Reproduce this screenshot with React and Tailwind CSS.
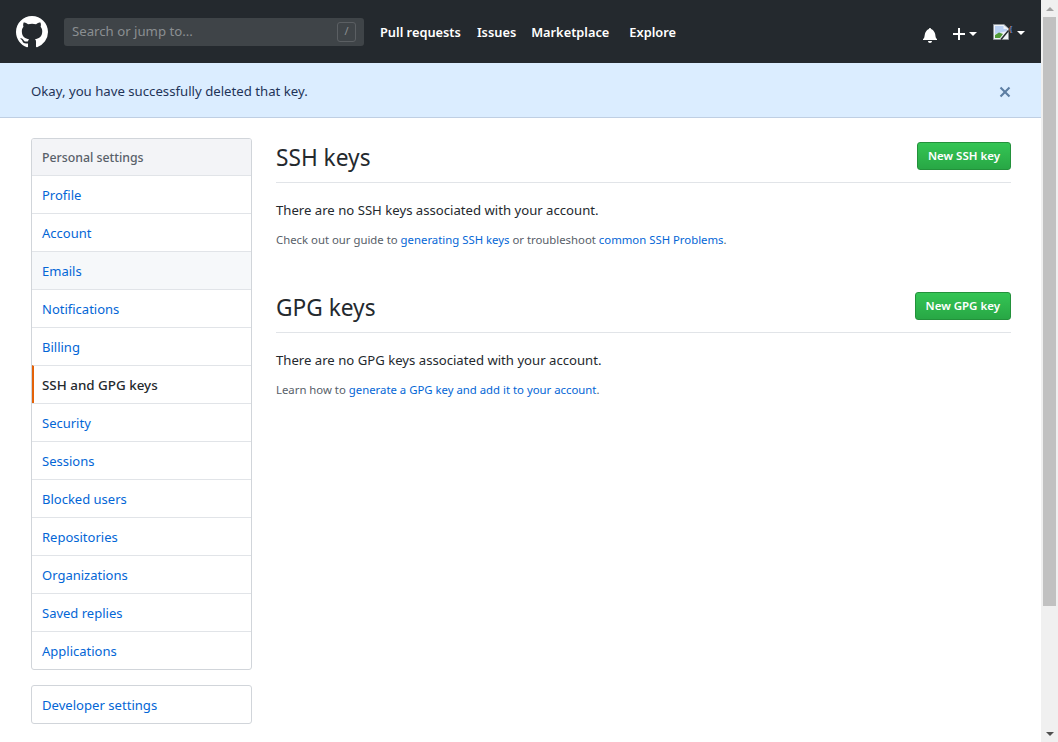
const font = "font-['Noto_Sans','Open_Sans',sans-serif]";

const navLinks = [
  { label: 'Pull requests', cls: 'ml-4' },
  { label: 'Issues', cls: 'ml-4' },
  { label: 'Marketplace', cls: 'ml-[15px]' },
  { label: 'Explore', cls: 'ml-5' },
];

const menuItems = [
  { label: 'Profile' },
  { label: 'Account' },
  { label: 'Emails', hover: true },
  { label: 'Notifications' },
  { label: 'Billing' },
  { label: 'SSH and GPG keys', selected: true },
  { label: 'Security' },
  { label: 'Sessions' },
  { label: 'Blocked users' },
  { label: 'Repositories' },
  { label: 'Organizations' },
  { label: 'Saved replies' },
  { label: 'Applications' },
];

function Caret({ className }) {
  return <span className={`ml-1 w-0 h-0 border-x-4 border-x-transparent border-t-4 border-t-white ${className}`} />;
}

function Header() {
  return (
    <header className="h-[63px] bg-[#24292e] flex items-center pl-4 pr-[16px] shrink-0">
      <svg width="32" height="32" viewBox="0 0 16 16" fill="#fff">
        <path d="M8 0C3.58 0 0 3.58 0 8c0 3.54 2.29 6.53 5.47 7.59.4.07.55-.17.55-.38 0-.19-.01-.82-.01-1.49-2.01.37-2.53-.49-2.69-.94-.09-.23-.48-.94-.82-1.13-.28-.15-.68-.52-.01-.53.63-.01 1.08.58 1.23.82.72 1.21 1.87.87 2.33.66.07-.52.28-.87.51-1.07-1.78-.2-3.64-.89-3.64-3.95 0-.87.31-1.59.82-2.15-.08-.2-.36-1.02.08-2.12 0 0 .67-.21 2.2.82.64-.18 1.32-.27 2-.27.68 0 1.36.09 2 .27 1.53-1.04 2.2-.82 2.2-.82.44 1.1.16 1.92.08 2.12.51.56.82 1.27.82 2.15 0 3.07-1.87 3.75-3.65 3.95.29.25.54.73.54 1.48 0 1.07-.01 1.93-.01 2.2 0 .21.15.46.55.38A8.013 8.013 0 0016 8c0-4.42-3.58-8-8-8z" />
      </svg>
      <div className="ml-4 w-[300px] h-[28px] bg-[#3f4448] rounded-[3px] flex items-center pl-2 pr-2">
        <span className="flex-1 pt-[1px] text-[13.2px] text-[#8b8f92]">Search or jump to...</span>
        <span className="w-[19px] h-[20px] border border-[#5b5f63] rounded-[3px] flex items-center justify-center text-[11px] text-[#8b8f92]">/</span>
      </div>
      <nav className="flex items-center pt-[3px]">
        {navLinks.map((l) => (
          <a key={l.label} className={`${l.cls} text-[12.8px] font-semibold text-white`}>{l.label}</a>
        ))}
      </nav>
      <div className="ml-auto flex items-center">
        <svg className="mt-[6px]" width="14" height="16" viewBox="0 0 14 16" fill="#fff">
          <path d="M14 12v1H0v-1l.73-.58c.77-.77.81-2.55 1.19-4.42C2.69 3.23 6 2 6 2c0-.55.45-1 1-1s1 .45 1 1c0 0 3.39 1.23 4.16 5 .38 1.88.42 3.66 1.19 4.42l.66.58H14zm-7 4c1.11 0 2-.89 2-2H5c0 1.11.89 2 2 2z" />
        </svg>
        <svg className="ml-4 mt-[5px]" width="12" height="16" viewBox="0 0 12 16" fill="#fff">
          <path d="M12 9H7v5H5V9H0V7h5V2h2v5h5v2z" />
        </svg>
        <Caret className="mt-[5px]" />
        {/* broken image placeholder, with a sliver of the alt text */}
        <svg className="ml-4" width="20" height="16" viewBox="0 0 20 16">
          <path d="M0.5 0.5H11L15.5 4.5V15.5H0.5Z" fill="#eef2f7" stroke="#8d9398" />
          <path d="M2 2H10.5V5H14V7L2 10Z" fill="#b9d0f3" />
          <path d="M2 14V11L6 8.5L10 10L7 14Z" fill="#4f9a36" />
          <path d="M8 15.5L15.5 6.5" stroke="#24292e" strokeWidth="1.5" />
          <path d="M18 2C16.5 3.5 16.5 7 18 9" stroke="#e0703a" strokeWidth="1" fill="none" />
          <path d="M19 2C17.5 3.5 17.5 7 19 9" stroke="#3f7fd0" strokeWidth="1" fill="none" />
        </svg>
        <Caret className="mt-[3px]" />
      </div>
    </header>
  );
}

function Flash() {
  return (
    <div className="h-[55px] bg-[#dbedff] border-b border-[#bfcfe3] flex items-center pl-[31px] pr-[30px] pt-[3px] shrink-0">
      <span className="flex-1 text-[13.2px] text-[#1f3458]">Okay, you have successfully deleted that key.</span>
      <svg width="12" height="16" viewBox="0 0 12 16" fill="#5c7ea3">
        <path d="M7.48 8l3.75 3.75-1.48 1.48L6 9.48l-3.75 3.75-1.48-1.48L4.52 8 .77 4.25l1.48-1.48L6 6.52l3.75-3.75 1.48 1.48L7.48 8z" />
      </svg>
    </div>
  );
}

function Sidebar() {
  return (
    <aside className="w-[221px] shrink-0">
      <div className="border border-[#d1d5da] rounded-[3px] overflow-hidden">
        <div className="h-[36px] bg-[#f3f4f7] flex items-center pl-[10px] pt-[2px] text-[12.3px] font-medium text-[#586069]">Personal settings</div>
        {menuItems.map((item) => (
          <a
            key={item.label}
            className={`h-[38px] border-t border-[#e1e4e8] flex items-center pt-[2px] ${
              item.selected
                ? 'border-l-2 border-l-[#e36209] pl-[8px] text-[#24292e] font-medium text-[13.4px]'
                : item.hover
                  ? 'pl-[10px] bg-[#f6f8fa] text-[#0366d6] text-[13px]'
                  : 'pl-[10px] text-[#0366d6] text-[13px]'
            }`}
          >
            {item.label}
          </a>
        ))}
      </div>
      <div className="mt-[15px] h-[39px] border border-[#d1d5da] rounded-[3px] flex items-center pl-[10px] pt-[3px] text-[13.1px] text-[#0366d6]">
        Developer settings
      </div>
    </aside>
  );
}

function KeySection({ title, button, children }) {
  return (
    <section className="mb-[39px] last:mb-0">
      <div className="h-[45px] border-b border-[#e1e4e8] flex items-start justify-between">
        <h2 className="text-[22.7px] leading-[40px] text-[#24292e]">{title}</h2>
        <button className="mt-[4px] h-[28px] px-[10px] rounded-[3px] border border-[#23913b] bg-gradient-to-b from-[#34c554] to-[#28a745] text-[11.5px] font-semibold text-white">
          {button}
        </button>
      </div>
      {children}
    </section>
  );
}

export default function App() {
  return (
    <div className={`${font} h-[742px] flex overflow-hidden bg-white`}>
      <div className="flex-1 flex flex-col min-w-0">
        <Header />
        <Flash />
        <main className="flex pt-[20px] pl-[31px] pr-[30px]">
          <Sidebar />
          <div className="flex-1 ml-[24px]">
            <KeySection title="SSH keys" button="New SSH key">
              <p className="mt-[17px] text-[13.15px] leading-[21px] text-[#24292e]">There are no SSH keys associated with your account.</p>
              <p className="mt-[10px] text-[11.35px] leading-[18px] text-[#586069]">
                Check out our guide to <a className="text-[#0366d6]">generating SSH keys</a> or troubleshoot <a className="text-[#0366d6]">common SSH Problems</a>.
              </p>
            </KeySection>
            <KeySection title="GPG keys" button="New GPG key">
              <p className="mt-[17px] text-[13.15px] leading-[21px] text-[#24292e]">There are no GPG keys associated with your account.</p>
              <p className="mt-[10px] text-[11.35px] leading-[18px] text-[#586069]">
                Learn how to <a className="text-[#0366d6]">generate a GPG key and add it to your account</a>.
              </p>
            </KeySection>
          </div>
        </main>
      </div>
      {/* scrollbar */}
      <div className="w-[17px] shrink-0 bg-[#f0f0f0] flex flex-col items-center">
        <div className="h-[17px] flex items-center justify-center">
          <span className="w-0 h-0 border-x-4 border-x-transparent border-b-4 border-b-[#a3a3a3]" />
        </div>
        <div className="w-[13px] h-[589px] bg-[#c1c1c1] mx-auto" />
        <div className="mt-auto h-[17px] flex items-center justify-center">
          <span className="w-0 h-0 border-x-4 border-x-transparent border-t-4 border-t-[#505050]" />
        </div>
      </div>
    </div>
  );
}
